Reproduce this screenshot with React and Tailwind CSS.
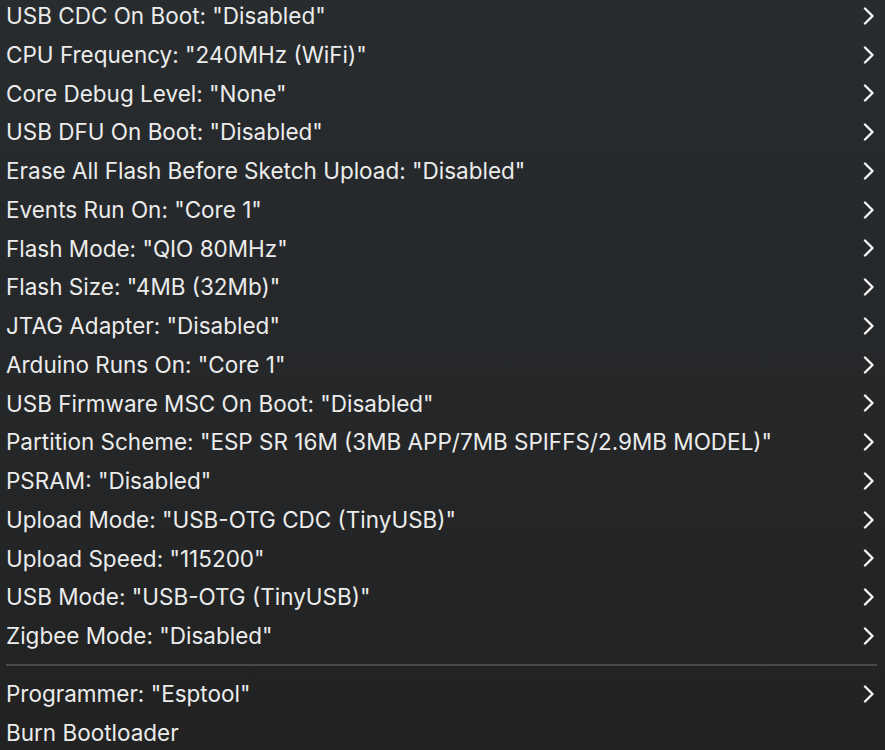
const items = [
  'USB CDC On Boot: "Disabled"',
  'CPU Frequency: "240MHz (WiFi)"',
  'Core Debug Level: "None"',
  'USB DFU On Boot: "Disabled"',
  'Erase All Flash Before Sketch Upload: "Disabled"',
  'Events Run On: "Core 1"',
  'Flash Mode: "QIO 80MHz"',
  'Flash Size: "4MB (32Mb)"',
  'JTAG Adapter: "Disabled"',
  'Arduino Runs On: "Core 1"',
  'USB Firmware MSC On Boot: "Disabled"',
  'Partition Scheme: "ESP SR 16M (3MB APP/7MB SPIFFS/2.9MB MODEL)"',
  'PSRAM: "Disabled"',
  'Upload Mode: "USB-OTG CDC (TinyUSB)"',
  'Upload Speed: "115200"',
  'USB Mode: "USB-OTG (TinyUSB)"',
  'Zigbee Mode: "Disabled"',
];

function Chevron() {
  return (
    <svg width="12" height="18" viewBox="0 0 12 18" fill="none" className="text-[#f2f2f2]">
      <path d="M2 1.5 L9.5 9 L2 16.5" stroke="currentColor" strokeWidth="2.4" strokeLinecap="round" strokeLinejoin="round" />
    </svg>
  );
}

function Row({ label, submenu = true }) {
  return (
    <div className="flex h-[38.75px] items-center justify-between pl-[6px] pr-[10px]">
      <span className="whitespace-nowrap text-[22.5px] text-[#ececec]">{label}</span>
      {submenu && <Chevron />}
    </div>
  );
}

export default function App() {
  return (
    <div
      className="h-[750px] w-[885px] overflow-hidden bg-gradient-to-b from-[#282c2f] via-[#252729] to-[#222222]"
      style={{ fontFamily: 'Inter, "Open Sans", sans-serif' }}
    >
      <div className="-mt-[3.4px] flex flex-col">
        {items.map((it) => (
          <Row key={it} label={it} />
        ))}
        <div className="flex h-[19.25px] items-center px-[6px] pr-[8px]">
          <div className="h-[2px] w-full bg-[#4a4a4a]" />
        </div>
        <Row label='Programmer: "Esptool"' />
        <Row label="Burn Bootloader" submenu={false} />
      </div>
    </div>
  );
}
